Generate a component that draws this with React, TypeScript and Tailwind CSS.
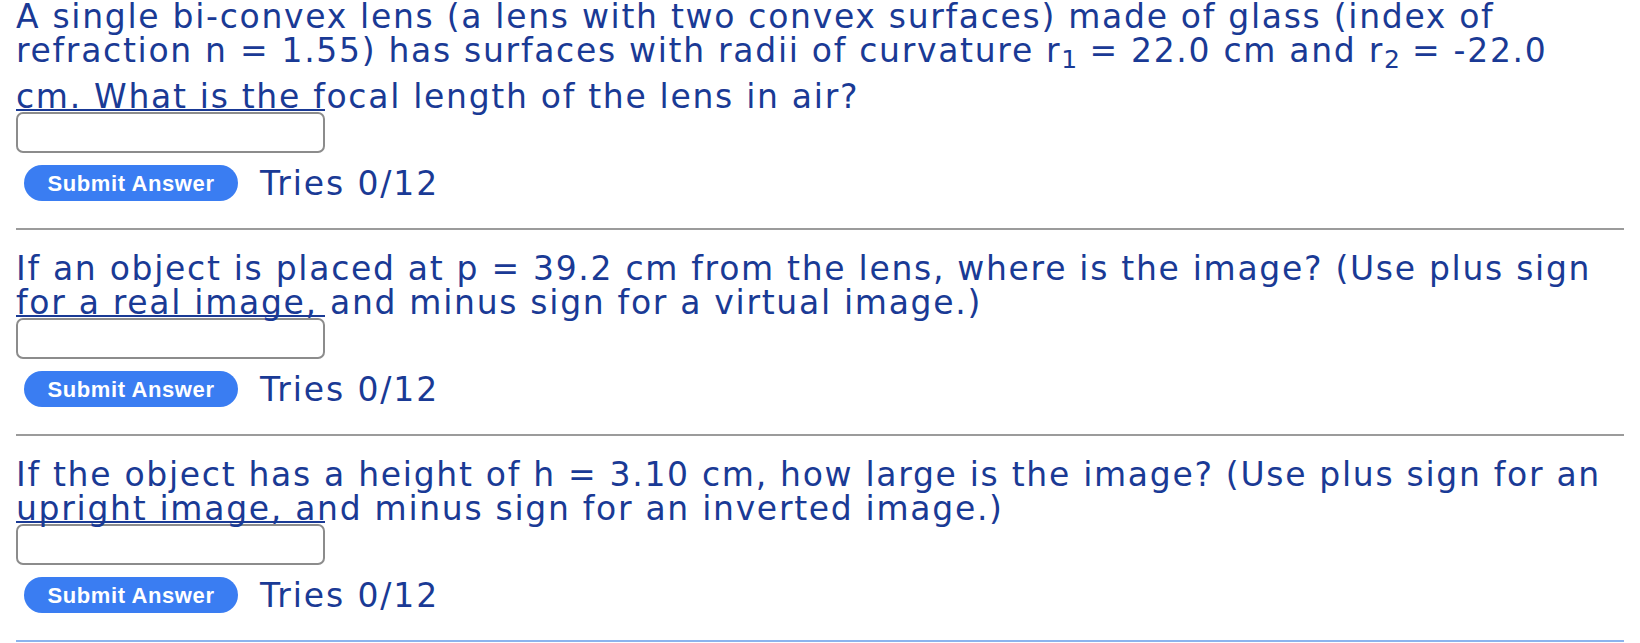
import React from 'react'

const lineCls = "block text-[33px] leading-[34px] tracking-[1.7px] text-[#1a3a95] whitespace-nowrap"
const font = { fontFamily: '"DejaVu Sans", Verdana, sans-serif' }

function AnswerBlock({ textHeight, lines }: { textHeight: string; lines: React.ReactNode[] }) {
  return (
    <div>
      <div className={`flex flex-col justify-end ${textHeight}`} style={font}>
        {lines}
      </div>
      {/* thin line sitting over the last text line */}
      <div className="mt-[-5px] h-[2px] w-[309px] bg-[#1a3a95]" />
      <input
        type="text"
        className="mt-[1px] block h-[41px] w-[309px] rounded-[7px] border-2 border-[#8c8c8c] bg-white outline-none"
      />
      <div className="mt-[12px] flex items-center">
        <button
          className="ml-[8px] h-[36px] w-[214px] rounded-full bg-[#3a7df2] text-[22px] font-bold tracking-[0.6px] text-white"
          style={{ fontFamily: '"Liberation Sans", Arial, sans-serif' }}
        >
          Submit Answer
        </button>
        <span className="ml-[22px] text-[33px] leading-[35px] tracking-[1.9px] text-[#1a3a95]" style={font}>
          Tries 0/12
        </span>
      </div>
    </div>
  )
}

function Sub({ children }: { children: React.ReactNode }) {
  return <sub className="text-[25px] tracking-normal">{children}</sub>
}

export default function App() {
  return (
    <div className="min-h-[643px] bg-white px-[16px]">
      <AnswerBlock
        textHeight="h-[114px]"
        lines={[
          <span key="1" className={lineCls}>
            A single bi-convex lens (a lens with two convex surfaces) made of glass (index of
          </span>,
          <span key="2" className={`${lineCls} mb-[12px]`}>
            refraction n = 1.55) has surfaces with radii of curvature r<Sub>1</Sub> = 22.0 cm and r<Sub>2</Sub> = -22.0
          </span>,
          <span key="3" className={lineCls}>
            cm. What is the focal length of the lens in air?
          </span>,
        ]}
      />
      <div className="mt-[27px] h-[2px] bg-[#9b9b9b]" />

      <AnswerBlock
        textHeight="h-[90px]"
        lines={[
          <span key="1" className={lineCls}>
            If an object is placed at p = 39.2 cm from the lens, where is the image? (Use plus sign
          </span>,
          <span key="2" className={lineCls}>
            for a real image, and minus sign for a virtual image.)
          </span>,
        ]}
      />
      <div className="mt-[27px] h-[2px] bg-[#9b9b9b]" />

      <AnswerBlock
        textHeight="h-[90px]"
        lines={[
          <span key="1" className={lineCls}>
            If the object has a height of h = 3.10 cm, how large is the image? (Use plus sign for an
          </span>,
          <span key="2" className={lineCls}>
            upright image, and minus sign for an inverted image.)
          </span>,
        ]}
      />
      <div className="mt-[27px] h-[2px] bg-[#8bb4ee]" />
    </div>
  )
}
